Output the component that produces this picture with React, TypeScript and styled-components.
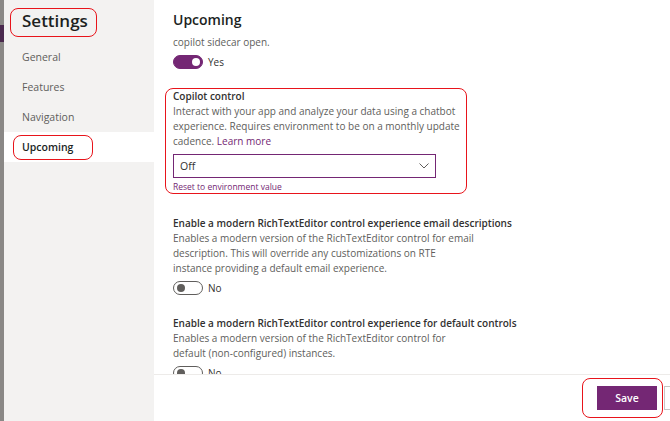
import * as React from 'react'
import styled, { createGlobalStyle } from 'styled-components'

const GlobalStyle = createGlobalStyle`
  html, body {
    margin: 0;
    padding: 0;
    background: #ffffff;
  }
  body {
    font-family: "Open Sans", "Noto Sans", sans-serif;
    color: #323130;
  }
`

const purple = '#742774'

const Page = styled.div`
  width: 670px;
  height: 421px;
  display: flex;
  overflow: hidden;
`

const BackdropStrip = styled.div`
  width: 4px;
  flex-shrink: 0;
  background: linear-gradient(
    to bottom,
    #8a8886 0px,
    #8a8886 25px,
    #4a2a4e 25px,
    #4a2a4e 42px,
    #8a8886 42px
  );
`

const Sidebar = styled.nav`
  width: 150px;
  flex-shrink: 0;
  background: #f3f2f1;
  display: flex;
  flex-direction: column;
  padding-top: 9px;
`

const SidebarTitle = styled.div`
  position: relative;
  margin-left: 18px;
  font-size: 17px;
  line-height: 24px;
  font-weight: 600;
  color: #201f1e;
  margin-bottom: 9px;
`

const NavItem = styled.div<{ $active?: boolean }>`
  position: relative;
  height: 30px;
  display: flex;
  align-items: center;
  padding-left: 18px;
  font-size: 10.5px;
  color: ${p => (p.$active ? '#201f1e' : '#605e5c')};
  font-weight: ${p => (p.$active ? 600 : 400)};
  background: ${p => (p.$active ? '#ffffff' : 'transparent')};
`

const Annotation = styled.span<{ $l: number; $t: number; $w: number; $h: number }>`
  position: absolute;
  left: ${p => p.$l}px;
  top: ${p => p.$t}px;
  width: ${p => p.$w}px;
  height: ${p => p.$h}px;
  border: 1.5px solid #e8141b;
  border-radius: 8px;
  box-sizing: border-box;
  pointer-events: none;
`

const Main = styled.main`
  flex: 1;
  display: flex;
  flex-direction: column;
  min-width: 0;
`

const Content = styled.div`
  flex: 1;
  overflow: hidden;
  padding: 10px 0 0 19px;
`

const Heading = styled.div`
  font-size: 14px;
  line-height: 20px;
  font-weight: 600;
  color: #201f1e;
`

const Text = styled.div`
  font-size: 10px;
  line-height: 15px;
  color: #605e5c;
  white-space: nowrap;
`

const Section = styled.section<{ $gap: number }>`
  position: relative;
  margin-top: ${p => p.$gap}px;
`

const Title = styled.div`
  font-size: 10px;
  line-height: 15px;
  font-weight: 600;
  color: #323130;
  white-space: nowrap;
`

const Link = styled.a`
  color: ${purple};
  text-decoration: none;
`

const ToggleRow = styled.div`
  display: flex;
  align-items: center;
  gap: 5px;
  margin-top: 5px;
  height: 14px;
`

const Track = styled.span<{ $on: boolean }>`
  width: 30px;
  height: 14px;
  box-sizing: border-box;
  border-radius: 7px;
  display: flex;
  align-items: center;
  justify-content: ${p => (p.$on ? 'flex-end' : 'flex-start')};
  padding: 0 2.5px;
  background: ${p => (p.$on ? purple : '#ffffff')};
  border: 1px solid ${p => (p.$on ? purple : '#605e5c')};
`

const Knob = styled.span<{ $on: boolean }>`
  width: 8px;
  height: 8px;
  border-radius: 50%;
  background: ${p => (p.$on ? '#ffffff' : '#605e5c')};
`

const ToggleLabel = styled.span`
  font-size: 10px;
  color: #323130;
`

const Select = styled.div`
  margin-top: 5px;
  width: 263px;
  height: 24px;
  box-sizing: border-box;
  border: 1px solid ${purple};
  display: flex;
  align-items: center;
  justify-content: space-between;
  padding: 0 6px 0 6px;
  font-size: 10.5px;
  color: #323130;
`

const ResetLink = styled.div`
  margin-top: 3px;
  font-size: 8.5px;
  line-height: 12px;
  color: ${purple};
`

const Footer = styled.footer`
  height: 47px;
  flex-shrink: 0;
  border-top: 1px solid #edebe9;
  box-sizing: border-box;
  display: flex;
  align-items: flex-start;
  gap: 7px;
  padding: 11px 0 0 443px;
  overflow: hidden;
`

const Button = styled.button<{ $primary?: boolean }>`
  position: relative;
  flex-shrink: 0;
  height: 24px;
  width: ${p => (p.$primary ? 60 : 70)}px;
  border: 1px solid ${p => (p.$primary ? purple : '#c8c6c4')};
  background: ${p => (p.$primary ? purple : '#ffffff')};
  color: ${p => (p.$primary ? '#ffffff' : '#323130')};
  font-family: "Open Sans", "Noto Sans", sans-serif;
  font-size: 10.5px;
  font-weight: 600;
  padding: 0;
`

const Toggle = ({ on, label }: { on: boolean; label: string }) => (
  <ToggleRow>
    <Track $on={on}>
      <Knob $on={on} />
    </Track>
    <ToggleLabel>{label}</ToggleLabel>
  </ToggleRow>
)

export default function App() {
  return (
    <Page>
      <GlobalStyle />
      <BackdropStrip />

      <Sidebar>
        <SidebarTitle>
          Settings
          <Annotation $l={-12} $t={-1} $w={87} $h={29} />
        </SidebarTitle>
        <NavItem>General</NavItem>
        <NavItem>Features</NavItem>
        <NavItem>Navigation</NavItem>
        <NavItem $active>
          Upcoming
          <Annotation $l={9} $t={3} $w={80} $h={25} />
        </NavItem>
      </Sidebar>

      <Main>
        <Content>
          <Heading>Upcoming</Heading>
          <Text style={{ marginTop: 5 }}>copilot sidecar open.</Text>
          <Toggle on label="Yes" />

          <Section $gap={20}>
            <Annotation $l={-8} $t={-1} $w={302} $h={106} />
            <Title>Copilot control</Title>
            <Text>Interact with your app and analyze your data using a chatbot</Text>
            <Text>experience. Requires environment to be on a monthly update</Text>
            <Text>
              cadence. <Link href="#">Learn more</Link>
            </Text>
            <Select>
              <span>Off</span>
              <svg width="10" height="6" viewBox="0 0 10 6">
                <path d="M0.5 0.5 L5 5 L9.5 0.5" fill="none" stroke="#605e5c" strokeWidth="1" />
              </svg>
            </Select>
            <ResetLink>Reset to environment value</ResetLink>
          </Section>

          <Section $gap={23}>
            <Title>Enable a modern RichTextEditor control experience email descriptions</Title>
            <Text>Enables a modern version of the RichTextEditor control for email</Text>
            <Text>description. This will override any customizations on RTE</Text>
            <Text>instance providing a default email experience.</Text>
            <Toggle on={false} label="No" />
          </Section>

          <Section $gap={21}>
            <Title>Enable a modern RichTextEditor control experience for default controls</Title>
            <Text>Enables a modern version of the RichTextEditor control for</Text>
            <Text>default (non-configured) instances.</Text>
            <Toggle on={false} label="No" />
          </Section>
        </Content>

        <Footer>
          <Button $primary>
            Save
            <Annotation $l={-16} $t={-9} $w={81} $h={40} />
          </Button>
          <Button aria-label="Cancel" />
        </Footer>
      </Main>
    </Page>
  )
}
